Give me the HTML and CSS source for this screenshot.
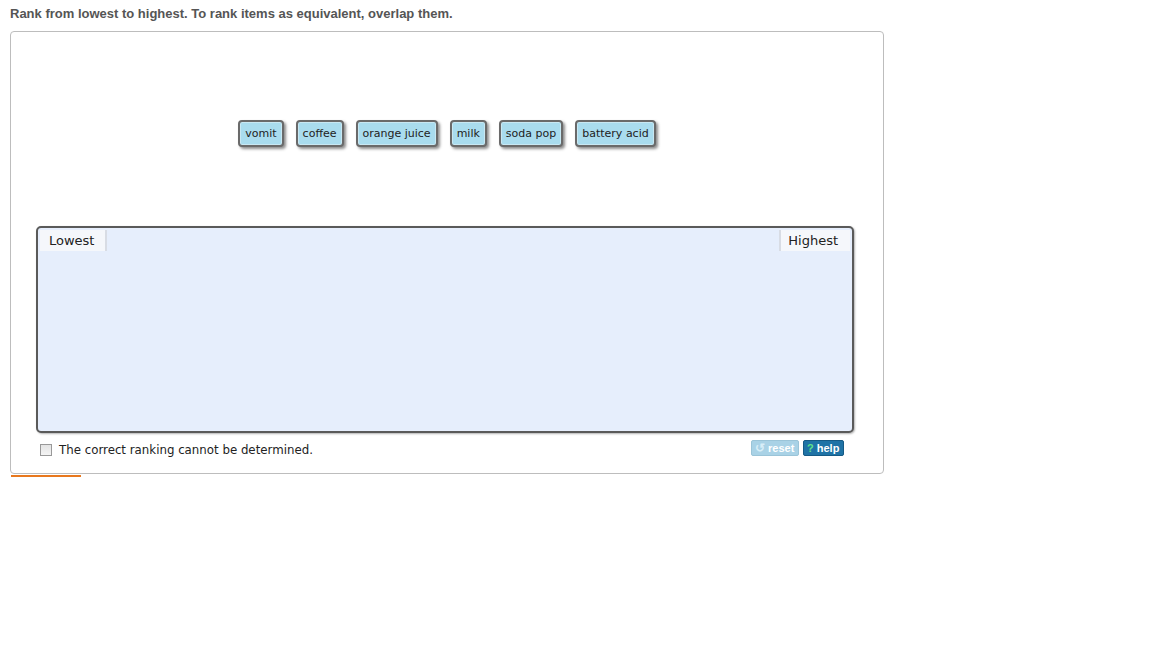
FILE: index.html
```html
<!DOCTYPE html>
<html lang="en">
<head>
    <meta charset="UTF-8">
    <title>Ranking</title>
    <link rel="stylesheet" href="styles.css">
</head>
<body>
    <div class="prompt">Rank from lowest to highest. To rank items as equivalent, overlap them.</div>
    <div class="panel">
        <div class="pool">
            <div class="item">vomit</div>
            <div class="item">coffee</div>
            <div class="item">orange juice</div>
            <div class="item">milk</div>
            <div class="item">soda pop</div>
            <div class="item">battery acid</div>
        </div>
        <div class="ranking">
            <div class="label">Lowest</div>
            <div class="label label-right">Highest</div>
        </div>
        <div class="footer">
            <label class="check">
                <span class="box"></span>
                The correct ranking cannot be determined.
            </label>
            <div class="tools">
                <span class="btn btn-reset"><span class="ico">&#8634;</span>reset</span>
                <span class="btn btn-help"><span class="q">?</span>help</span>
            </div>
        </div>
    </div>
    <div class="underline"></div>
</body>
</html>
```

FILE: styles.css
```css
body {
    margin: 0;
    background-color: #fff;
    font-family: "DejaVu Sans", Verdana, sans-serif;
}
.prompt {
    padding: 6px 10px 0;
    height: 18px;
    font-family: "Liberation Sans", Arial, sans-serif;
    font-size: 13px;
    font-weight: bold;
    color: #555;
}
.panel {
    margin: 7px 0 0 10px;
    width: 872px;
    height: 441px;
    border: 1px solid #bdbdbd;
    border-radius: 4px;
}
.pool {
    display: flex;
    justify-content: center;
    gap: 12px;
    padding-top: 88px;
    height: 106px;
}
.item {
    height: 23px;
    line-height: 23px;
    padding: 0 5px;
    font-size: 11px;
    color: #222;
    background-color: #a9dcee;
    border: 2px solid #6a6a6a;
    border-radius: 4px;
    box-shadow: inset 0 0 0 1px #c8e8f3, 2px 2px 3px rgba(0, 0, 0, 0.45);
}
.ranking {
    display: flex;
    justify-content: space-between;
    margin-left: 25px;
    width: 810px;
    height: 199px;
    padding: 2px;
    background-color: #e6eefc;
    border: 2px solid #5a5a5a;
    border-radius: 5px;
    box-shadow: 1px 1px 2px rgba(0, 0, 0, 0.3);
}
.label {
    align-self: flex-start;
    height: 21px;
    line-height: 22px;
    padding: 0 11px 0 9px;
    font-size: 13px;
    color: #222;
    background-color: #f5f7fb;
    border-right: 2px solid #d8dce4;
}
.label-right {
    padding: 0 12px 0 7px;
    border-right: none;
    border-left: 2px solid #d8dce4;
}
.footer {
    display: flex;
    justify-content: space-between;
    align-items: flex-start;
    margin: 7px 0 0 29px;
    width: 806px;
}
.check {
    display: flex;
    align-items: center;
    gap: 7px;
    margin-top: 3px;
    font-size: 11.8px;
    color: #222;
}
.box {
    width: 10px;
    height: 10px;
    border: 1px solid #999;
    background: linear-gradient(#e4e4e4, #f4f4f4);
}
.tools {
    display: flex;
    gap: 4px;
    margin-right: 2px;
}
.btn {
    display: flex;
    align-items: center;
    height: 14px;
    padding: 0 3px;
    font-family: "Liberation Sans", Arial, sans-serif;
    font-size: 11px;
    font-weight: bold;
    color: #fff;
    border-radius: 2px;
}
.btn-reset {
    width: 40px;
    background-color: #a9d2e6;
    border: 1px solid #9ac4d8;
}
.btn-help {
    width: 33px;
    background-color: #1f73a6;
    border: 1px solid #155a85;
}
.ico {
    margin-right: 3px;
    font-size: 12px;
    color: #d8eef8;
}
.q {
    margin-right: 3px;
    color: #5fe08a;
}
.underline {
    margin: 1px 0 0 11px;
    width: 70px;
    height: 2px;
    background-color: #e8781e;
}
```
